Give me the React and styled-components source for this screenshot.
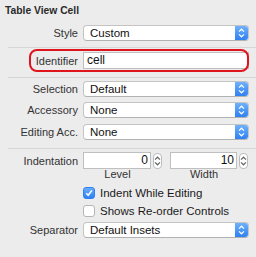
import styled, { createGlobalStyle } from "styled-components";

const GlobalStyle = createGlobalStyle`
  body {
    margin: 0;
    background: #ececec;
    font-family: "Liberation Sans", Arial, sans-serif;
  }
`;

const Panel = styled.section`
  width: 256px;
  height: 257px;
  padding-top: 4px;
  box-sizing: border-box;
  display: flex;
  flex-direction: column;
  background: #ececec;
`;

const Header = styled.h1`
  margin: 0 0 0 5px;
  font-size: 10.3px;
  line-height: 13px;
  font-weight: bold;
  color: #2a2a2a;
`;

const Row = styled.div`
  position: relative;
  display: grid;
  grid-template-columns: 78px 166px;
  column-gap: 5px;
  align-items: center;
  height: ${(p) => p.$h || 16}px;
  margin-top: ${(p) => p.$mt || 0}px;
`;

const Label = styled.span`
  text-align: right;
  font-size: 11px;
  color: #333;
  white-space: nowrap;
`;

const Divider = styled.div`
  height: 1px;
  background: #d6d6d6;
  margin: ${(p) => p.$mt}px 0 0 8px;
`;

const Popup = styled.div`
  display: flex;
  height: 16px;
  box-sizing: border-box;
  border: 1px solid #c4c4c4;
  border-bottom-color: #b2b2b2;
  border-radius: 4px;
  background: #fff;
  overflow: hidden;
`;

const PopupValue = styled.span`
  flex: 1;
  padding-left: 6px;
  font-size: 11.5px;
  line-height: 14px;
  color: #111;
`;

const PopupArrow = styled.span`
  width: 13px;
  display: flex;
  align-items: center;
  justify-content: center;
  background: linear-gradient(#6fb2fa, #2f80f2);
`;

const TextInput = styled.div`
  height: 17px;
  box-sizing: border-box;
  border: 1px solid #bfbfbf;
  background: #fff;
  padding-left: 3px;
  font-size: 12px;
  line-height: 15px;
  color: #111;
`;

const Highlight = styled.div`
  position: absolute;
  left: 29px;
  right: 7px;
  top: -3px;
  bottom: -3px;
  border: 2px solid #e0141c;
  border-radius: 8px;
  pointer-events: none;
`;

const Steppers = styled.div`
  display: flex;
  align-items: center;
`;

const NumField = styled.div`
  width: ${(p) => p.$w}px;
  height: 17px;
  box-sizing: border-box;
  border: 1px solid #bfbfbf;
  background: #fff;
  padding-right: 2px;
  text-align: right;
  font-size: 12px;
  line-height: 15px;
  color: #111;
`;

const Stepper = styled.span`
  width: 9px;
  height: 16px;
  margin: 0 ${(p) => p.$mr || 0}px 0 2px;
  box-sizing: border-box;
  border: 1px solid #bcbcbc;
  border-radius: 4px;
  background: #fff;
  display: flex;
  align-items: center;
  justify-content: center;
`;

const Captions = styled.div`
  display: flex;
  height: 11px;
  margin-left: 83px;
  font-size: 11px;
  line-height: 11px;
  color: #333;
`;

const Caption = styled.span`
  width: ${(p) => p.$w}px;
  text-align: center;
`;

const CheckRow = styled.label`
  display: flex;
  align-items: center;
  gap: 5px;
  height: 14px;
  margin: ${(p) => p.$mt}px 0 0 83px;
  font-size: 11.5px;
  color: #1a1a1a;
`;

const Box = styled.span`
  width: 12px;
  height: 12px;
  box-sizing: border-box;
  border-radius: 3px;
  display: flex;
  align-items: center;
  justify-content: center;
  border: 1px solid ${(p) => (p.$on ? "#2f80f2" : "#b5b5b5")};
  background: ${(p) => (p.$on ? "linear-gradient(#6aaef9, #2f80f2)" : "#fff")};
`;

const Chevrons = ({ color = "#fff" }) => (
  <svg width="7" height="10" viewBox="0 0 7 10">
    <path
      d="M1 3.6 L3.5 1.2 L6 3.6 M1 6.4 L3.5 8.8 L6 6.4"
      fill="none"
      stroke={color}
      strokeWidth="1.2"
    />
  </svg>
);

const Select = ({ value }) => (
  <Popup>
    <PopupValue>{value}</PopupValue>
    <PopupArrow>
      <Chevrons />
    </PopupArrow>
  </Popup>
);

const Check = () => (
  <svg width="8" height="8" viewBox="0 0 8 8">
    <path d="M1.2 4.2 L3.2 6.3 L6.8 1.5" fill="none" stroke="#fff" strokeWidth="1.5" />
  </svg>
);

export default function App() {
  return (
    <Panel>
      <GlobalStyle />
      <Header>Table View Cell</Header>

      <Row $mt={8}>
        <Label>Style</Label>
        <Select value="Custom" />
      </Row>
      <Divider $mt={6} />

      <Row $mt={4} $h={17}>
        <Highlight />
        <Label>Identifier</Label>
        <TextInput>cell</TextInput>
      </Row>
      <Divider $mt={8} />

      <Row $mt={3}>
        <Label>Selection</Label>
        <Select value="Default" />
      </Row>
      <Row $mt={5}>
        <Label>Accessory</Label>
        <Select value="None" />
      </Row>
      <Row $mt={6}>
        <Label>Editing Acc.</Label>
        <Select value="None" />
      </Row>
      <Divider $mt={8} />

      <Row $mt={3} $h={17}>
        <Label>Indentation</Label>
        <Steppers>
          <NumField $w={68}>0</NumField>
          <Stepper $mr={8}>
            <Chevrons color="#666" />
          </Stepper>
          <NumField $w={67}>10</NumField>
          <Stepper>
            <Chevrons color="#666" />
          </Stepper>
        </Steppers>
      </Row>
      <Captions>
        <Caption $w={69}>Level</Caption>
        <Caption $w={104}>Width</Caption>
      </Captions>

      <CheckRow $mt={6}>
        <Box $on>
          <Check />
        </Box>
        Indent While Editing
      </CheckRow>
      <CheckRow $mt={4}>
        <Box />
        Shows Re-order Controls
      </CheckRow>

      <Row $mt={4}>
        <Label>Separator</Label>
        <Select value="Default Insets" />
      </Row>
    </Panel>
  );
}
